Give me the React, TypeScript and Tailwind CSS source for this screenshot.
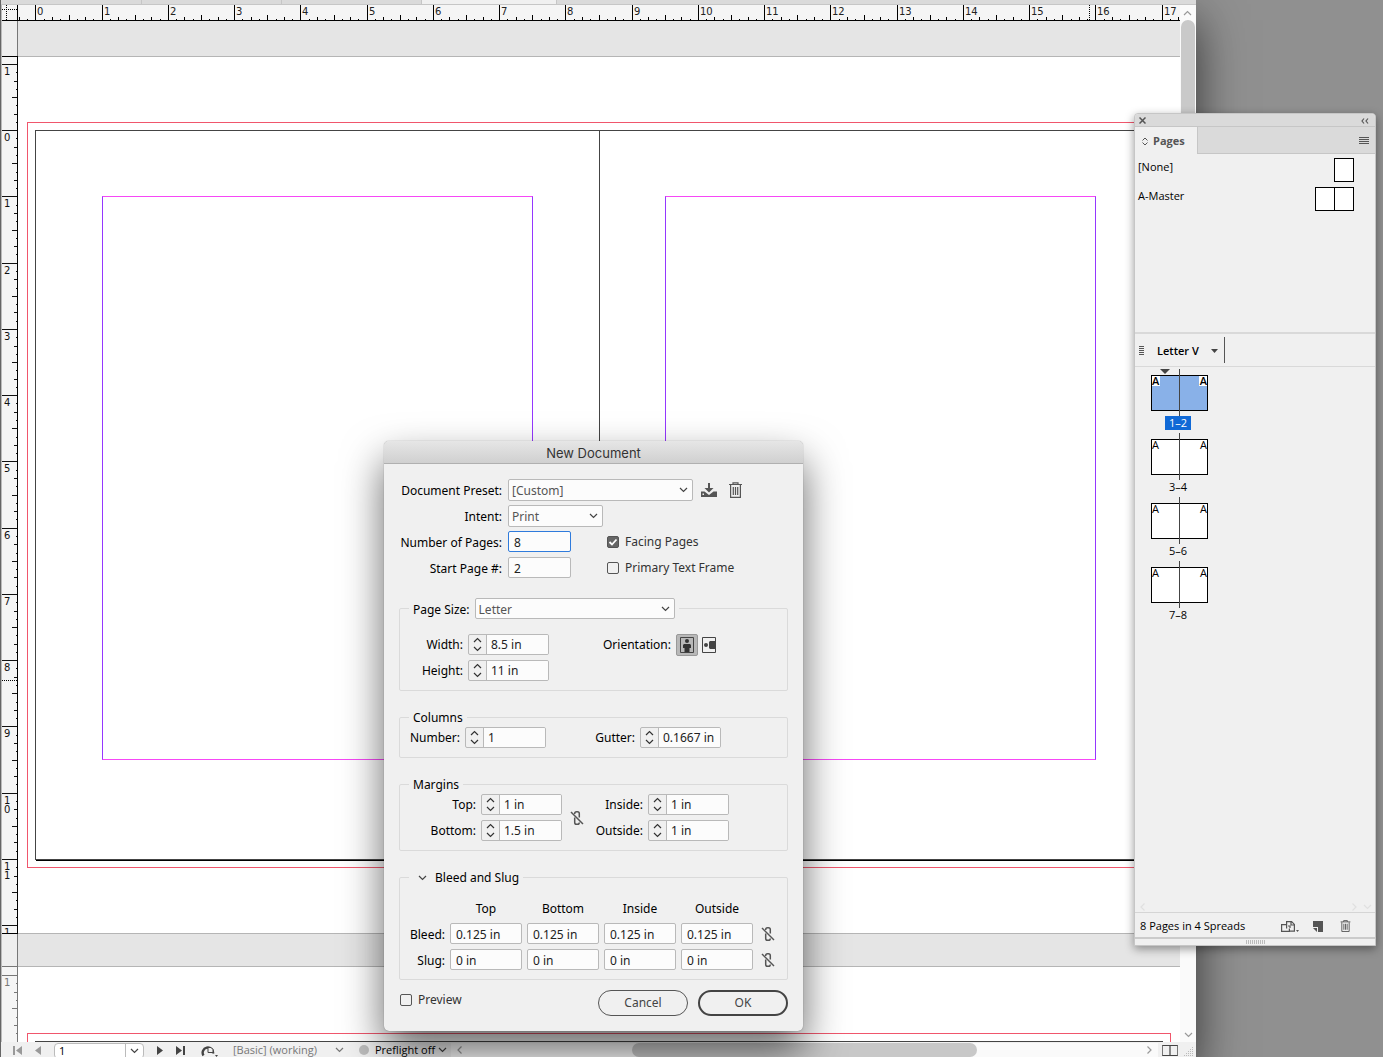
import type React from "react"
import { useState } from "react"
import clsx from "clsx"

const INCH = 66.25

const spreads = ["1–2", "3–4", "5–6", "7–8"]

type IconProps = { className?: string }

function Chevron({ className }: IconProps) {
  return (
    <svg viewBox="0 0 9 6" className={clsx("h-[6px] w-[9px] shrink-0", className)} fill="none" stroke="currentColor" strokeWidth="1.2">
      <path d="M1 1l3.5 3.5L8 1" />
    </svg>
  )
}

function BrokenLink({ className }: IconProps) {
  return (
    <svg viewBox="0 0 14 16" className={clsx("h-4 w-[14px]", className)} fill="none" stroke="#555" strokeWidth="1.5">
      <path d="M4.700 4V3.500Q4.700 1.700 6.500 1.700h1Q9.300 1.700 9.300 3.500V7.500M4.700 7.500v5Q4.700 14.300 6.500 14.300h1Q9.300 14.300 9.300 12.500" />
      <path d="M1 2l12 12" />
    </svg>
  )
}

function TrashIcon({ className }: IconProps) {
  return (
    <svg viewBox="0 0 13 16" className={className} fill="none" stroke="#555" strokeWidth="1.2">
      <path d="M0 2.5h13M4 2.5V.8h5v1.7M1.6 3v12.3h9.8V3M4.3 5v8M6.5 5v8M8.7 5v8" />
    </svg>
  )
}

function ticks(origin: number, from: number, to: number) {
  const list: { pos: number; eighth: number }[] = []
  for (let i = from * 8; i <= to * 8; i++) {
    list.push({ pos: Math.round(origin + (i * INCH) / 8), eighth: i })
  }
  return list
}

function tickLength(eighth: number) {
  if (eighth % 8 === 0) return 16
  if (eighth % 4 === 0) return 6
  if (eighth % 2 === 0) return 4
  return 2
}

function HorizontalRuler() {
  return (
    <svg className="block h-4 min-w-0 flex-1 overflow-hidden bg-[#f5f5f5] font-['DejaVu_Sans',sans-serif]" shapeRendering="crispEdges">
      {ticks(17.4, -0.25, 17.5).map(({ pos, eighth }) => (
        <g key={eighth}>
          <rect x={pos} y={16 - tickLength(eighth)} width="1" height={tickLength(eighth)} />
          {eighth % 8 === 0 && (
            <text x={pos + 2} y="10" fontSize="10" fill="#222">
              {eighth / 8}
            </text>
          )}
        </g>
      ))}
      <path d="M1071.5 0v15" stroke="#000" strokeDasharray="1 1" />
      <rect y="15" width="100%" height="1" />
    </svg>
  )
}

function VerticalTicks({ origin, from, to, color }: { origin: number; from: number; to: number; color: string }) {
  return (
    <g fill={color}>
      {ticks(origin, from, to).map(({ pos, eighth }) => (
        <g key={eighth}>
          <rect x={16 - tickLength(eighth)} y={pos} width={tickLength(eighth)} height="1" />
          {eighth % 8 === 0 &&
            String(Math.abs(eighth / 8))
              .split("")
              .map((digit, i) => (
                <text key={i} x="2" y={pos + 11 + i * 9} fontSize="10">
                  {digit}
                </text>
              ))}
        </g>
      ))}
    </g>
  )
}

function VerticalRuler() {
  return (
    <svg className="block h-full w-4 shrink-0 bg-[#f5f5f5] font-['DejaVu_Sans',sans-serif]" shapeRendering="crispEdges">
      <clipPath id="first-spread">
        <rect y="35" width="16" height="877" />
      </clipPath>
      <rect width="16" height="35" fill="#eeeeee" />
      <rect y="912" width="16" height="33" fill="#eeeeee" />
      <g clipPath="url(#first-spread)">
        <VerticalTicks origin={109.2} from={-1} to={12} color="#111" />
      </g>
      <VerticalTicks origin={1020.4} from={-1} to={-0.125} color="#777" />
      <rect y="35" width="16" height="1" />
      <rect y="912" width="16" height="1" />
      <rect y="945" width="16" height="1" fill="#777" />
      <path d="M0 659.5h15" stroke="#000" strokeDasharray="1 1" />
      <rect x="15" width="1" height="100%" fill="#777" />
      <rect x="15" y="35" width="1" height="878" />
    </svg>
  )
}

function MarginGuides({ className }: IconProps) {
  return <div className={clsx("absolute top-[175px] h-[564px] w-[431px] border-x border-y border-x-[#9437ff] border-y-[#f648f6]", className)} />
}

// Everything on the pasteboard is placed in document coordinates.
function Pasteboard() {
  return (
    <div className="relative min-w-0 flex-1 overflow-hidden bg-white">
      <div className="absolute inset-x-0 top-0 h-9 border-b border-[#b5b5b5] bg-[#e5e5e5]" />
      <div className="absolute inset-x-0 top-[912px] h-[34px] border-y border-[#b5b5b5] bg-[#e5e5e5]" />
      <div className="absolute left-[9px] top-[101px] h-[746px] w-[1144px] border border-[#f0566c]" />
      <div className="absolute left-[17px] top-[109px] h-[730px] w-[1128px] border border-[#444] shadow-[1px_1px_0_#000]" />
      <div className="absolute left-[581px] top-[109px] h-[730px] w-px bg-[#444]" />
      <MarginGuides className="left-[84px]" />
      <MarginGuides className="left-[647px]" />
      <div className="absolute left-[9px] top-[1012px] h-[746px] w-[1144px] border border-[#f0566c]" />
      <div className="absolute left-[17px] top-[1020px] h-[730px] w-[1128px] border border-[#444]" />
    </div>
  )
}

function StatusBar() {
  return (
    <div className="flex h-[15px] shrink-0 items-center overflow-hidden bg-[#f0f0f0] pl-3 pt-px font-['Open_Sans',sans-serif] text-[11px]">
      <button aria-label="First page" className="text-[#999]">
        <svg viewBox="0 0 9 9" className="h-[9px] w-[9px]" fill="currentColor">
          <path d="M0 0h2v9H0zM9 0v9L3 4.5z" />
        </svg>
      </button>
      <button aria-label="Previous page" className="ml-[13px] text-[#999]">
        <svg viewBox="0 0 6 9" className="h-[9px] w-[6px]" fill="currentColor">
          <path d="M6 0v9L0 4.500z" />
        </svg>
      </button>
      <div className="ml-[13px] flex h-4 w-[90px] self-start rounded-sm border border-[#bbb] bg-white">
        <input aria-label="Page" defaultValue="1" className="min-w-0 flex-1 pl-1 outline-none" />
        <button aria-label="Choose page" className="flex w-[18px] items-center justify-center border-l border-[#bbb] text-[#444]">
          <Chevron />
        </button>
      </div>
      <button aria-label="Next page" className="ml-[13px] text-[#444]">
        <svg viewBox="0 0 6 9" className="h-[9px] w-[6px]" fill="currentColor">
          <path d="M0 0v9l6-4.500z" />
        </svg>
      </button>
      <button aria-label="Last page" className="ml-[13px] text-[#444]">
        <svg viewBox="0 0 9 9" className="h-[9px] w-[9px]" fill="currentColor">
          <path d="M7 0h2v9H7zM0 0v9l6-4.500z" />
        </svg>
      </button>
      <button aria-label="Open options" className="ml-4">
        <svg viewBox="0 0 17 13" className="h-[13px] w-[17px]">
          <path d="M2.500 11.500A5.200 5.200 0 1 1 12 9.500" fill="none" stroke="#444" strokeWidth="2.400" />
          <path d="M7 3.500h3l2 2v3H7z" fill="#f0f0f0" stroke="#444" />
          <path d="M14 11h3l-1.500 2z" fill="#444" />
        </svg>
      </button>
      <button className="ml-[15px] flex w-[111px] items-center justify-between whitespace-nowrap text-[#777]">
        [Basic] (working)
        <Chevron />
      </button>
      <span className="ml-[15px] h-[10px] w-[10px] rounded-full bg-[#bdbdbd]" />
      <button className="ml-[6px] flex w-[72px] items-center justify-between whitespace-nowrap text-black">
        Preflight off
        <Chevron className="text-[#444]" />
      </button>
      <div className="ml-[4px] flex h-full min-w-0 flex-1 items-center bg-[#fafafa] px-1">
        <Chevron className="rotate-90 text-[#999]" />
        <div className="flex min-w-0 flex-1 pl-[24%] pr-[24%]">
          <div className="h-[14px] w-full rounded-full bg-[#c8c8c8]" />
        </div>
        <Chevron className="-rotate-90 text-[#999]" />
      </div>
      <button aria-label="Split layout" className="ml-[4px] flex h-[11px] w-4 border-x border-y border-x-[#777] border-y-[#444]">
        <span className="mx-auto h-full w-[2px] bg-[#888]" />
      </button>
      <svg viewBox="0 0 12 12" className="ml-1 mr-[2px] h-3 w-3 text-[#bbb]" fill="none" stroke="currentColor" strokeDasharray="1 1">
        <path d="M2 11.500h10M4 9.500h8M6 7.500h6M8 5.500h4M10 3.500h2" />
      </svg>
    </div>
  )
}

function DocumentWindow() {
  return (
    <div className="flex h-screen min-w-0 flex-1 flex-col border-l border-[#666] bg-[#f0f0f0] shadow-[0_20px_45px_rgba(0,0,0,0.65)]">
      <div className="flex h-[5px] shrink-0 border-b border-[#c6c6c6] bg-[#dadada]">
        <div className="w-[141px] border-r border-[#c6c6c6]" />
        <div className="w-[140px] border-r border-[#c6c6c6]" />
        <div className="w-[140px] border-r border-[#c6c6c6]" />
        <div className="w-[135px] border-r border-[#c6c6c6] bg-[#f0f0f0]" />
      </div>
      <div className="flex min-h-0 flex-1">
        <div className="flex min-w-0 flex-1 flex-col border-l border-[#bbb]">
          <div className="flex shrink-0">
            <svg className="h-4 w-4 shrink-0 bg-[#f5f5f5]" shapeRendering="crispEdges">
              <path d="M0 4.500h15M4.500 0v15" stroke="#000" strokeDasharray="1 1" />
              <path d="M0 15h16v1H0zM15 0h1v16h-1z" />
            </svg>
            <HorizontalRuler />
          </div>
          <div className="flex min-h-0 flex-1">
            <VerticalRuler />
            <Pasteboard />
          </div>
        </div>
        <div className="flex w-4 shrink-0 flex-col items-center justify-between bg-[#fafafa] pb-1 text-[#999]">
          <div className="flex h-[15px] items-center pr-px">
            <Chevron className="rotate-180" />
          </div>
          <div className="w-[14px] flex-1 rounded-full bg-[#c9c9c9]" />
          <div className="h-[160px]" />
          <Chevron />
        </div>
      </div>
      <StatusBar />
    </div>
  )
}

function Spread({ label, active }: { label: string; active: boolean }) {
  return (
    <button className="flex h-16 w-[57px] flex-col items-center">
      <span className={clsx("relative flex h-9 w-full justify-between border border-black text-[11px] leading-[10px]", active ? "bg-[#89b1e8]" : "bg-white")}>
        <span className={clsx("h-[10px] bg-white pr-px", active && "font-semibold")}>A</span>
        <span className={clsx("h-[10px] bg-white pl-px", active && "font-semibold")}>A</span>
        <span className="absolute -top-[7px] left-[27px] h-[47px] w-px bg-[#444]" />
        {active && (
          <svg viewBox="0 0 10 5" className="absolute -top-[7px] left-2 h-[5px] w-[10px]" fill="#444">
            <path d="M0 0h10L5 5z" />
          </svg>
        )}
      </span>
      <span className="pr-[3px]">
        <span className={clsx("relative mt-[5px] block h-[14px] px-1 text-[11px] leading-[14px]", active ? "bg-[#1069d6] text-white" : "text-black")}>{label}</span>
      </span>
    </button>
  )
}

function PagesPanel() {
  return (
    <aside className="absolute right-[7px] top-[113px] flex h-[833px] w-[242px] flex-col rounded-t-[4px] border border-[#c6c6c6] bg-[#f0f0f0] font-['Open_Sans',sans-serif] text-[11px] text-black shadow-[0_3px_10px_rgba(0,0,0,0.4)]">
      <div className="flex h-[13px] shrink-0 items-center justify-between rounded-t-[4px] border-b border-[#c6c6c6] bg-[#dadada] pl-1 pr-[6px] pt-px">
        <button aria-label="Close" className="text-[#555]">
          <svg viewBox="0 0 7 7" className="h-[7px] w-[7px]" stroke="currentColor" strokeWidth="1.5">
            <path d="M.5.5l6 6M6.500.5l-6 6" />
          </svg>
        </button>
        <button aria-label="Collapse" className="text-[#555]">
          <svg viewBox="0 0 8 6" className="h-[6px] w-2" fill="none" stroke="currentColor" strokeWidth="1.2">
            <path d="M3 .5L1 3l2 2.500M7 .5L5 3l2 2.500" />
          </svg>
        </button>
      </div>
      <div className="flex h-[27px] shrink-0 justify-end bg-[#dadada]">
        <button className="mr-auto flex w-[63px] items-center gap-[5px] border-r border-[#c6c6c6] bg-[#f0f0f0] pl-[7px] pt-[2px] font-bold text-[#555]">
          <svg viewBox="0 0 6 9" className="h-[9px] w-[6px]" fill="none" stroke="currentColor">
            <path d="M.5 3.500L3 1l2.500 2.500M.5 5.500L3 8l2.500-2.500" />
          </svg>
          Pages
        </button>
        <div className="flex flex-1 items-center justify-end border-b border-[#c6c6c6] pr-[6px]">
          <button aria-label="Panel menu" className="flex w-[10px] flex-col gap-px">
            <span className="h-px bg-[#555]" />
            <span className="h-px bg-[#555]" />
            <span className="h-px bg-[#555]" />
            <span className="h-px bg-[#555]" />
          </button>
        </div>
      </div>
      <div className="flex h-[178px] shrink-0 flex-col gap-1 pl-[3px] pr-[21px] pt-1">
        <div className="flex h-[25px] justify-between">
          <span className="leading-[18px]">[None]</span>
          <span className="h-6 w-5 border border-black bg-white" />
        </div>
        <div className="flex h-[25px] justify-between">
          <span className="leading-[18px]">A-Master</span>
          <span className="flex h-6 w-[39px] border border-black bg-white">
            <span className="w-[19px] border-r border-black" />
          </span>
        </div>
      </div>
      <div className="flex h-[35px] shrink-0 items-center border-b border-t-2 border-[#d9d9d9] pl-1">
        <span className="flex w-[5px] flex-col gap-px">
          <span className="h-px bg-[#555]" />
          <span className="h-px bg-[#555]" />
          <span className="h-px bg-[#555]" />
          <span className="h-px bg-[#555]" />
          <span className="h-px bg-[#555]" />
        </span>
        <button className="ml-[13px] flex h-[26px] w-[68px] items-center justify-between border-r border-[#555] pr-[6px] pt-[2px] font-semibold">
          Letter V
          <svg viewBox="0 0 7 4" className="h-1 w-[7px]" fill="#444">
            <path d="M0 0h7L3.500 4z" />
          </svg>
        </button>
      </div>
      <div className="flex flex-1 flex-col justify-between">
        <div className="flex flex-col pl-4 pt-2">
          {spreads.map((label, i) => (
            <Spread key={label} label={label} active={i === 0} />
          ))}
        </div>
        <div className="flex items-center gap-1 px-[3px] pb-[2px] text-[#e0e0e0]">
          <Chevron className="mr-auto rotate-90" />
          <Chevron className="-rotate-90" />
          <Chevron />
        </div>
      </div>
      <div className="flex h-[25px] shrink-0 items-center border-t border-[#d5d5d5] pl-[5px] pr-6 pt-[2px]">
        <span className="mr-auto whitespace-nowrap">8 Pages in 4 Spreads</span>
        <button aria-label="Edit page size">
          <svg viewBox="0 0 18 13" className="h-[13px] w-[18px]" fill="none" stroke="#555" strokeWidth="1.2">
            <path d="M6 4.600H.6v6.800h7.800V8.500" />
            <path d="M5.600 8.400V1.600h5l2.800 2.800v6.800H8.400M10 1.600v3.400h3.400M7 6h2v2" />
            <path d="M15 10h3l-1.500 2z" fill="#555" stroke="none" />
          </svg>
        </button>
        <button aria-label="New page" className="ml-[14px]">
          <svg viewBox="0 0 10 11" className="h-[11px] w-[10px]" fill="#555">
            <path d="M0 0h10v11H5V6H0zM0 7h4v4z" />
          </svg>
        </button>
        <button aria-label="Delete page" className="ml-[17px]">
          <TrashIcon className="h-3 w-[11px]" />
        </button>
      </div>
      <div className="flex h-2 shrink-0 items-start justify-center gap-px border-t-2 border-[#cbcbcb] pt-px">
        {Array.from({ length: 10 }, (_, i) => (
          <span key={i} className="h-1 w-px bg-[#bbb]" />
        ))}
      </div>
    </aside>
  )
}

function TextField({ id, value, active, className }: { id: string; value: string; active?: boolean; className?: string }) {
  return (
    <input
      id={id}
      defaultValue={value}
      className={clsx(
        "h-[21px] rounded-[2px] border bg-[#fcfcfc] pl-[5px] pt-[2px] text-[#222] focus:outline-none",
        active ? "border-[#2f7bdc]" : "border-[#b9b9b9]",
        className,
      )}
    />
  )
}

function Stepper({ id, label, value, labelWidth, className }: { id: string; label: string; value: string; labelWidth: string; className?: string }) {
  return (
    <div className={clsx("flex items-center gap-[5px]", className)}>
      <label htmlFor={id} className={clsx("text-right", labelWidth)}>
        {label}
      </label>
      <div className="flex h-[21px] w-[81px] overflow-hidden rounded-[2px] border border-[#b9b9b9]">
        <div className="flex w-[18px] shrink-0 flex-col items-center justify-between border-r border-[#b9b9b9] py-[2px] text-[#333]">
          <button type="button" aria-label={`Increase ${label}`} className="flex">
            <Chevron className="rotate-180" />
          </button>
          <button type="button" aria-label={`Decrease ${label}`} className="flex">
            <Chevron />
          </button>
        </div>
        <input id={id} defaultValue={value} className="w-full min-w-0 bg-[#fcfcfc] pl-1 text-[#222] outline-none" />
      </div>
    </div>
  )
}

function SelectField({ id, options, className }: { id: string; options: string[]; className: string }) {
  return (
    <div className={clsx("grid h-[21px] items-center", className)}>
      <select
        id={id}
        className="col-start-1 row-start-1 h-full w-full appearance-none rounded-[2px] border border-[#b9b9b9] bg-[#fcfcfc] pl-[3px] pt-[2px] text-[#555] outline-none"
      >
        {options.map((option) => (
          <option key={option}>{option}</option>
        ))}
      </select>
      <Chevron className="pointer-events-none col-start-1 row-start-1 mr-[5px] justify-self-end text-[#444]" />
    </div>
  )
}

function CheckField({ label, defaultChecked, className }: { label: string; defaultChecked?: boolean; className?: string }) {
  return (
    <label className={clsx("flex items-center gap-[6px] text-[#333]", className)}>
      <span className="grid">
        <input
          type="checkbox"
          defaultChecked={defaultChecked}
          className="peer col-start-1 row-start-1 h-3 w-3 appearance-none rounded-[2px] border border-[#555] checked:bg-[#666]"
        />
        <svg viewBox="0 0 12 12" className="pointer-events-none invisible col-start-1 row-start-1 h-3 w-3 peer-checked:visible" fill="none" stroke="#fff" strokeWidth="1.800">
          <path d="M2.500 6l2.500 2.500 4.500-5" />
        </svg>
      </span>
      {label}
    </label>
  )
}

function Group({ legend, children, className }: { legend: React.ReactNode; children: React.ReactNode; className: string }) {
  return (
    <fieldset className={clsx("rounded-[2px] border border-[#dadada] pb-[9px]", className)}>
      <legend className="ml-[9px] px-1 leading-[17px]">{legend}</legend>
      {children}
    </fieldset>
  )
}

const edges = ["Top", "Bottom", "Inside", "Outside"]

function NewDocumentDialog() {
  const [portrait, setPortrait] = useState(true)

  return (
    <div
      role="dialog"
      aria-labelledby="dialog-title"
      className="absolute left-[384px] top-[441px] w-[419px] rounded-[5px] bg-[#f0f0f0] text-[12px] text-black shadow-[0_0_1px_rgba(0,0,0,0.5),0_20px_42px_rgba(0,0,0,0.6)]"
    >
      <h1
        id="dialog-title"
        className="h-[23px] rounded-t-[5px] border-b border-[#b0b0b0] bg-linear-to-b from-[#e6e6e6] to-[#d0d0d0] text-center font-[Inter,sans-serif] text-[13px] leading-[24px] text-[#333]"
      >
        New Document
      </h1>
      <form className="px-[15px] pb-[15px] pt-[15px]" onSubmit={(e) => e.preventDefault()}>
        <div className="grid grid-cols-[103px_1fr] items-center gap-x-[6px] gap-y-[5px]">
          <label htmlFor="preset" className="pt-[2px] text-right">
            Document Preset:
          </label>
          <div className="flex items-center">
            <SelectField id="preset" options={["[Custom]", "[Default]"]} className="w-[185px]" />
            <button type="button" aria-label="Save preset" className="ml-2">
              <svg viewBox="0 0 16 14" className="h-[14px] w-4" fill="#555">
                <path d="M7 0h2v5h3.500L8 9.500 3.500 5H7z" />
                <path d="M0 8.500h3.500L8 12l4.500-3.500H16V14H0zM1.500 10.500V12H3v-1.500z" fillRule="evenodd" />
              </svg>
            </button>
            <button type="button" aria-label="Delete preset" className="ml-3">
              <TrashIcon className="h-4 w-[13px]" />
            </button>
          </div>
          <label htmlFor="intent" className="pt-[2px] text-right">
            Intent:
          </label>
          <SelectField id="intent" options={["Print", "Web", "Mobile"]} className="w-[95px]" />
          <label htmlFor="pages" className="whitespace-nowrap pt-[2px] text-right">
            Number of Pages:
          </label>
          <div className="flex items-center">
            <TextField id="pages" value="8" active className="w-[63px]" />
            <CheckField label="Facing Pages" defaultChecked className="ml-9" />
          </div>
          <label htmlFor="start" className="pt-[2px] text-right">
            Start Page #:
          </label>
          <div className="flex items-center">
            <TextField id="start" value="2" className="w-[63px]" />
            <CheckField label="Primary Text Frame" className="ml-9" />
          </div>
        </div>

        <Group
          className="mt-[20px]"
          legend={
            <span className="flex items-center gap-[5px]">
              <label htmlFor="size" className="pt-[2px]">
                Page Size:
              </label>
              <SelectField id="size" options={["Letter", "Legal", "Tabloid", "A4"]} className="w-[200px]" />
            </span>
          }
        >
          <div className="flex items-start pt-[15px]">
            <div className="flex flex-col gap-[5px]">
              <Stepper id="width" label="Width:" value="8.5 in" labelWidth="w-[63px]" />
              <Stepper id="height" label="Height:" value="11 in" labelWidth="w-[63px]" />
            </div>
            <div className="flex items-center">
              <span className="w-[127px] pr-[5px] text-right">Orientation:</span>
              <button
                type="button"
                aria-label="Portrait"
                aria-pressed={portrait}
                onClick={() => setPortrait(true)}
                className={clsx("flex h-[22px] w-[22px] items-center justify-center rounded-[2px] border", portrait ? "border-[#999] bg-[#b8b8b8]" : "border-transparent")}
              >
                <svg viewBox="0 0 14 16" className="h-4 w-[14px]">
                  <path d="M.5.5h13v15H.5z" fill="none" stroke="#444" />
                  <circle cx="7" cy="4" r="2" fill="#333" />
                  <path d="M4 7h6l1 1v3H9.500v4h-5v-4H3V8z" fill="#333" />
                </svg>
              </button>
              <button
                type="button"
                aria-label="Landscape"
                aria-pressed={!portrait}
                onClick={() => setPortrait(false)}
                className={clsx("flex h-[22px] w-[22px] items-center justify-center rounded-[2px] border", portrait ? "border-transparent" : "border-[#999] bg-[#b8b8b8]")}
              >
                <svg viewBox="0 0 14 16" className="h-4 w-[14px]">
                  <path d="M.5.5h13v15H.5z" fill="none" stroke="#444" />
                  <circle cx="4" cy="8" r="2" fill="#444" />
                  <path d="M7 5l1-1h6v8H8l-1-1z" fill="#444" />
                </svg>
              </button>
            </div>
          </div>
        </Group>

        <Group className="mt-[18px]" legend="Columns">
          <div className="flex pt-px">
            <Stepper id="columns" label="Number:" value="1" labelWidth="w-[60px]" />
            <Stepper id="gutter" label="Gutter:" value="0.1667 in" labelWidth="w-[89px]" />
          </div>
        </Group>

        <Group className="mt-[18px]" legend="Margins">
          <div className="flex items-center pt-px">
            <div className="flex flex-col gap-[5px]">
              <Stepper id="margin-top" label="Top:" value="1 in" labelWidth="w-[76px]" />
              <Stepper id="margin-bottom" label="Bottom:" value="1.5 in" labelWidth="w-[76px]" />
            </div>
            <button type="button" aria-label="Link margins" className="ml-2">
              <BrokenLink />
            </button>
            <div className="flex flex-col gap-[5px]">
              <Stepper id="margin-inside" label="Inside:" value="1 in" labelWidth="w-[59px]" />
              <Stepper id="margin-outside" label="Outside:" value="1 in" labelWidth="w-[59px]" />
            </div>
          </div>
        </Group>

        <Group
          className="mt-[18px]"
          legend={
            <button type="button" className="flex items-center gap-2 pl-[5px]">
              <Chevron className="text-[#444]" />
              Bleed and Slug
            </button>
          }
        >
          <div className="grid grid-cols-[45px_72px_72px_72px_72px_20px] items-center gap-[5px] pt-[15px]">
            <span />
            {edges.map((edge) => (
              <span key={edge} className="h-[17px] text-center leading-[15px]">
                {edge}
              </span>
            ))}
            <span />
            {[
              { name: "Bleed", value: "0.125 in" },
              { name: "Slug", value: "0 in" },
            ].map((row) => (
              <div key={row.name} className="contents">
                <label htmlFor={`${row.name}-Top`} className="pt-[2px] text-right">
                  {row.name}:
                </label>
                {edges.map((edge) => (
                  <TextField key={edge} id={`${row.name}-${edge}`} value={row.value} className="w-full min-w-0" />
                ))}
                <button type="button" aria-label={`Link ${row.name}`} className="flex justify-center">
                  <BrokenLink />
                </button>
              </div>
            ))}
          </div>
        </Group>

        <div className="mt-[10px] flex items-center gap-[10px] text-[#444]">
          <CheckField label="Preview" className="mr-auto h-5 self-start pl-px" />
          <button type="button" className="h-[26px] w-[90px] rounded-full border border-[#555]">
            Cancel
          </button>
          <button type="submit" className="h-[26px] w-[90px] rounded-full border-2 border-[#444]">
            OK
          </button>
        </div>
      </form>
    </div>
  )
}

export default function App() {
  return (
    <div className="relative flex min-h-screen overflow-hidden bg-[#909090] pr-[187px] font-['Noto_Sans',sans-serif] text-[12px]">
      <DocumentWindow />
      <PagesPanel />
      <NewDocumentDialog />
    </div>
  )
}
